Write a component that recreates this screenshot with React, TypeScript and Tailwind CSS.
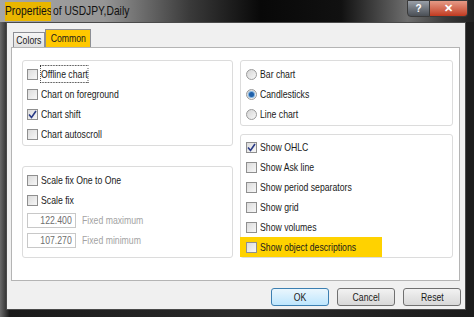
const font = { fontFamily: '"Liberation Sans", Arial, sans-serif' };

// the dialog text is narrow, like the old Tahoma captions
const Txt = ({ children, className = "" }: { children: React.ReactNode; className?: string }) => (
  <span className={`inline-block origin-left scale-x-[0.79] whitespace-nowrap ${className}`}>{children}</span>
);

const CheckBox = ({ checked }: { checked?: boolean }) => (
  <span className="relative flex h-[11px] w-[11px] shrink-0 items-center justify-center border border-[#8f8f8f] bg-gradient-to-br from-[#dcdcdc] to-[#f7f7f7]">
    {checked && (
      <svg width="9" height="9" viewBox="0 0 9 9" className="absolute">
        <path d="M1 4.5 L3.5 7.5 L8 1" fill="none" stroke="#2a3b86" strokeWidth="1.6" />
      </svg>
    )}
  </span>
);

const Radio = ({ checked }: { checked?: boolean }) => (
  <span className="flex h-[11px] w-[11px] shrink-0 items-center justify-center rounded-full border border-[#9a9a9a] bg-gradient-to-br from-[#d4d4d4] to-[#f8f8f8]">
    {checked && <span className="h-[5px] w-[5px] rounded-full bg-[#1f5fa8] ring-1 ring-[#7fb2e0]" />}
  </span>
);

const CheckRow = ({ label, checked, focus, highlight }: { label: string; checked?: boolean; focus?: boolean; highlight?: boolean }) => (
  <div className={`flex h-5 items-center gap-[3px] ${highlight ? "-ml-[6px] w-[142px] bg-[#ffd200] pl-[6px]" : ""}`}>
    <CheckBox checked={checked} />
    <Txt className={`text-[11px] text-[#1a1a1a] ${focus ? "outline outline-1 outline-dotted outline-[#333]" : ""}`}>{label}</Txt>
  </div>
);

const RadioRow = ({ label, checked }: { label: string; checked?: boolean }) => (
  <div className="flex h-5 items-center gap-[3px]">
    <Radio checked={checked} />
    <Txt className="text-[11px] text-[#1a1a1a]">{label}</Txt>
  </div>
);

const NumRow = ({ value, label }: { value: string; label: string }) => (
  <div className="flex h-5 items-center gap-[6px]">
    <div className="flex h-[15px] w-[49px] items-center justify-end border border-[#c8c8c8] bg-white pr-[3px] text-[11px] text-[#6d6d6d]">
      <span className="inline-block origin-right scale-x-[0.79] whitespace-nowrap">{value}</span>
    </div>
    <Txt className="text-[11px] text-[#a3a3a3]">{label}</Txt>
  </div>
);

const Button = ({ label, primary }: { label: string; primary?: boolean }) => (
  <div
    className={`flex h-[18px] w-[58px] items-center justify-center rounded-[3px] border text-[11px] text-[#1a1a1a] ${
      primary
        ? "border-[#3c7fb1] bg-gradient-to-b from-[#eaf6fd] to-[#bee6fd]"
        : "border-[#707070] bg-gradient-to-b from-[#f2f2f2] to-[#d8d8d8]"
    }`}
  >
    <span className="inline-block scale-x-[0.79]">{label}</span>
  </div>
);

export default function App() {
  return (
    <div
      className="flex h-[317px] w-[474px] flex-col overflow-hidden bg-[linear-gradient(to_right,#6a6a6a_0%,#1a1a1a_2%,#2a2a2a_50%,#1c1c1c_100%)]"
      style={font}
    >
      {/* title bar */}
      <div className="flex h-[22px] shrink-0 bg-[linear-gradient(to_right,#a6a6a6_0%,#959595_22%,#3a3a3a_40%,#080808_55%,#111_72%,#6e6e6e_86%,#3a3a3a_94%,#222_100%)]">
        <div className="flex items-center pl-[5px] text-[13px] text-[#111]">
          <span className="flex h-[19px] w-[46px] items-center overflow-hidden bg-[#e9b600]">
            <Txt>Properties</Txt>
          </span>
          <span className="ml-[2px]">
            <Txt>of USDJPY,Daily</Txt>
          </span>
        </div>
        <div className="flex-1" />
        <div className="mr-[6px] flex h-[17px] items-start">
          <div className="flex h-[17px] w-[23px] items-center justify-center rounded-bl-[4px] border border-[#3a3a3a] bg-gradient-to-b from-[#9aa0a8] to-[#4a4f56] text-[10px] font-bold text-white">
            ?
          </div>
          <div className="flex h-[17px] w-[38px] items-center justify-center rounded-br-[4px] border border-l-0 border-[#3a3a3a] bg-gradient-to-b from-[#e59a86] to-[#c0381e] text-[11px] font-bold text-white">
            ✕
          </div>
        </div>
      </div>

      {/* client area */}
      <div className="mb-[7px] ml-[6px] mr-[8px] flex flex-1 flex-col border border-[#4a4a4a] bg-[#f0f0f0] pl-[4px] pr-[4px]">
        <div className="mt-[6px] flex h-[18px] items-end pl-[2px]">
          <div className="flex h-[15px] w-[32px] items-center justify-center border border-b-0 border-[#8c8e94] bg-gradient-to-b from-[#f6f6f6] to-[#e0e0e0] text-[11px] text-[#1a1a1a]">
            <span className="inline-block scale-x-[0.79]">Colors</span>
          </div>
          <div className="flex h-[18px] w-[46px] items-center justify-center border border-b-0 border-[#8c8e94] bg-[#ffc800] text-[11px] text-[#1a1a1a]">
            <span className="inline-block scale-x-[0.79]">Common</span>
          </div>
        </div>
        <div className="flex h-[234px] w-[449px] gap-[7px] border border-[#b4b4b4] bg-white pl-[10px] pt-[12px]">
          <div className="flex w-[211px] flex-col gap-[20px]">
            <div className="h-[86px] rounded-[3px] border border-[#dcdcdc] pl-[4px] pt-[3px]">
              <CheckRow label="Offline chart" focus />
              <CheckRow label="Chart on foreground" />
              <CheckRow label="Chart shift" checked />
              <CheckRow label="Chart autoscroll" />
            </div>
            <div className="h-[92px] rounded-[3px] border border-[#dcdcdc] pl-[4px] pt-[3px]">
              <CheckRow label="Scale fix One to One" />
              <CheckRow label="Scale fix" />
              <NumRow value="122.400" label="Fixed maximum" />
              <NumRow value="107.270" label="Fixed minimum" />
            </div>
          </div>
          <div className="flex w-[213px] flex-col gap-[8px]">
            <div className="h-[66px] rounded-[3px] border border-[#dcdcdc] pl-[5px] pt-[3px]">
              <RadioRow label="Bar chart" />
              <RadioRow label="Candlesticks" checked />
              <RadioRow label="Line chart" />
            </div>
            <div className="h-[124px] rounded-[3px] border border-[#dcdcdc] pl-[5px] pt-[2px]">
              <CheckRow label="Show OHLC" checked />
              <CheckRow label="Show Ask line" />
              <CheckRow label="Show period separators" />
              <CheckRow label="Show grid" />
              <CheckRow label="Show volumes" />
              <CheckRow label="Show object descriptions" highlight />
            </div>
          </div>
        </div>
        <div className="mt-[7px] flex justify-end gap-[8px]">
          <Button label="OK" primary />
          <Button label="Cancel" />
          <Button label="Reset" />
        </div>
      </div>
    </div>
  );
}
